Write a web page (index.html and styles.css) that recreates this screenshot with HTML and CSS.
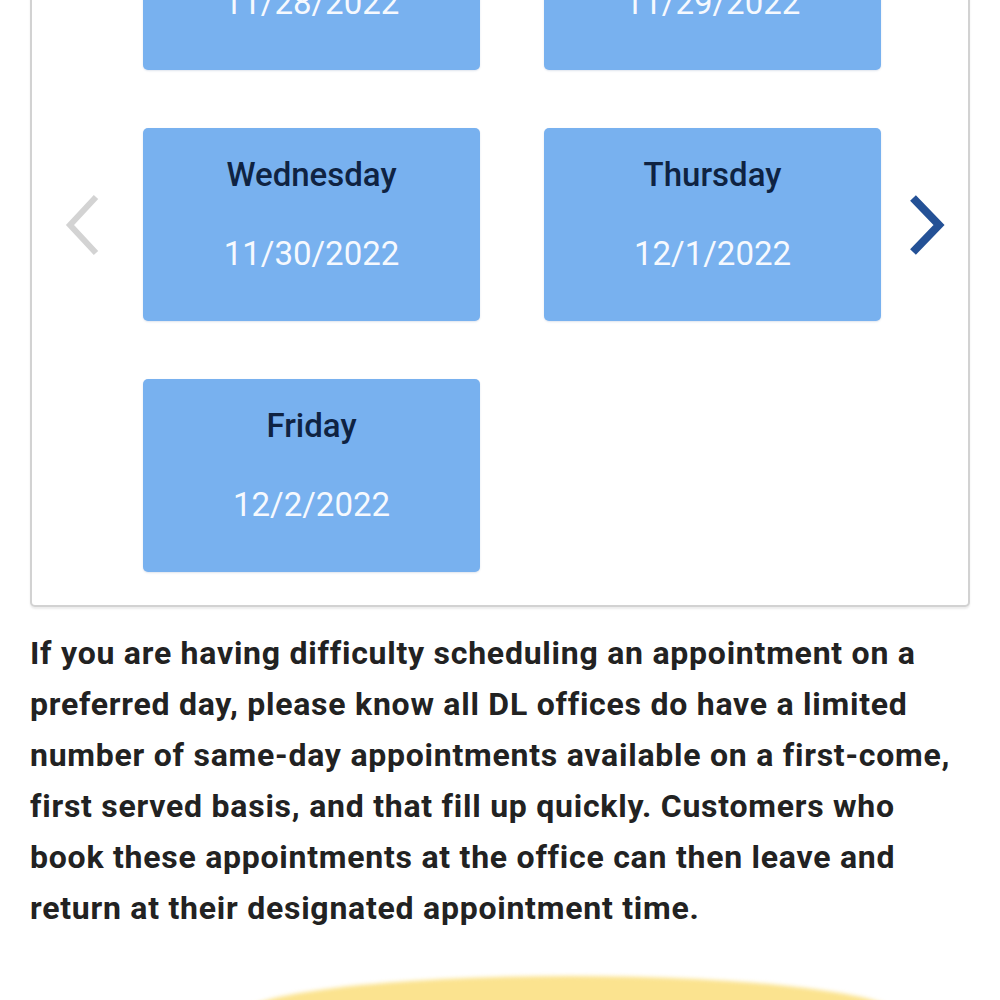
FILE: index.html
```html
<!DOCTYPE html>
<html>
<head>
<meta charset="utf-8">
<link rel="stylesheet" href="styles.css">
</head>
<body>
<div class="page">
  <div class="box">
    <div class="grid">
      <div class="card c1"><div class="day">Monday</div><div class="date">11/28/2022</div></div>
      <div class="card c2"><div class="day">Tuesday</div><div class="date">11/29/2022</div></div>
      <div class="chev left">
        <svg width="40" height="62" viewBox="0 0 40 62"><path d="M33 3 L7 31 L33 59" fill="none" stroke="#d3d3d3" stroke-width="6"/></svg>
      </div>
      <div class="card c1"><div class="day">Wednesday</div><div class="date">11/30/2022</div></div>
      <div class="card c2"><div class="day">Thursday</div><div class="date">12/1/2022</div></div>
      <div class="chev right">
        <svg width="40" height="62" viewBox="0 0 40 62"><path d="M6 4 L32 31 L6 58" fill="none" stroke="#245196" stroke-width="8"/></svg>
      </div>
      <div class="card c1"><div class="day">Friday</div><div class="date">12/2/2022</div></div>
    </div>
  </div>
  <p class="note">If you are having difficulty scheduling an appointment on a preferred day, please know all DL offices do have a limited number of same-day appointments available on a first-come, first served basis, and that fill up quickly. Customers who book these appointments at the office can then leave and return at their designated appointment time.</p>
  <div class="blob"></div>
</div>
</body>
</html>
```
FILE: styles.css
```css
html, body {
  margin: 0;
  padding: 0;
  background: #ffffff;
  overflow: hidden;
}
.page {
  padding: 0 30px;
  font-family: Roboto, "Liberation Sans", sans-serif;
}
.box {
  margin-top: -160px;
  border: 2px solid #d2d2d2;
  border-radius: 5px;
  background: #fff;
  padding: 35px 0 33px 0;
  box-shadow: 0 2px 2px rgba(0,0,0,0.08);
}
.grid {
  display: grid;
  grid-template-columns: 111px 337px 64px 337px 87px;
  row-gap: 58px;
}
.c1 { grid-column: 2; }
.c2 { grid-column: 4; }
.chev { display: flex; align-items: center; }
.chev.left { grid-column: 1; justify-content: flex-start; padding-left: 31px; }
.chev.right { grid-column: 5; justify-content: flex-start; padding-left: 26px; }
.card {
  background: #78b1ef;
  border-radius: 5px;
  height: 193px;
  box-sizing: border-box;
  padding-top: 29px;
  text-align: center;
  box-shadow: 0 1px 2px rgba(40,80,140,0.15);
}
.day {
  font-size: 33px;
  font-weight: 500;
  line-height: 36px;
  color: #0f2342;
}
.date {
  margin-top: 43px;
  font-size: 33px;
  font-weight: 400;
  line-height: 36px;
  color: #f6f9fe;
}
.note {
  margin: 21px 0 0 0;
  font-size: 32px;
  font-weight: 700;
  letter-spacing: 0.75px;
  line-height: 51px;
  color: #222222;
}
.blob {
  margin: 42px 0 0 210px;
  width: 660px;
  height: 80px;
  border-radius: 50%;
  background: #fbe38f;
  filter: blur(2px);
}
```
